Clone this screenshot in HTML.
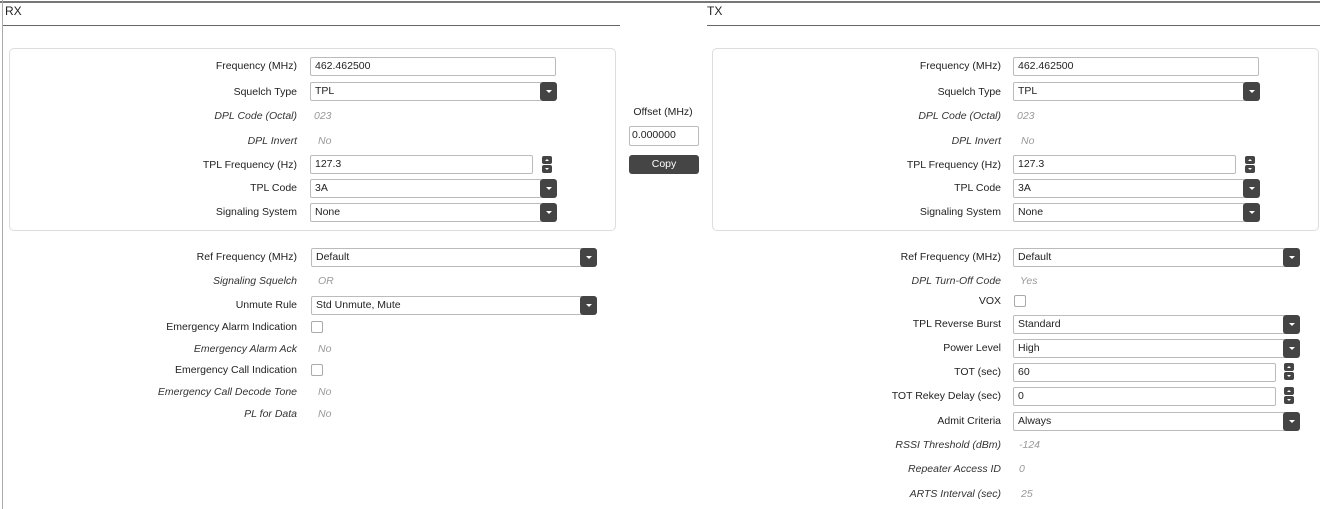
<!DOCTYPE html>
<html><head><style>
body{margin:0;width:1320px;height:509px;background:#fff;position:relative;overflow:hidden;font-family:"Liberation Sans",sans-serif;font-size:10.5px;color:#222}
div{position:absolute;box-sizing:border-box}
.l{text-align:right;width:200px;line-height:14px}
.i{font-style:italic;color:#333}
.v{font-style:italic;color:#999;line-height:14px}
.in{border:1px solid #bbb;border-radius:2px;height:19px;line-height:17px;padding-left:4px;background:#fff}
.dd{width:17px;height:19px;background:#444;border-radius:3px}
.dd:after{content:"";position:absolute;left:6px;top:8px;border-left:3px solid transparent;border-right:3px solid transparent;border-top:3px solid #fff}
.sp{width:10px;height:18px}
.sp:before,.sp:after{content:"";position:absolute;left:0;width:10px;height:8px;background:#444;border-radius:2px}
.sp:before{top:0}.sp:after{top:9px}
.sp i{position:absolute;left:3px;width:0;height:0;border-left:2px solid transparent;border-right:2px solid transparent;z-index:2}
.sp i.u{top:3px;border-bottom:2px solid #fff}
.sp i.d{top:12px;border-top:2px solid #fff}
.cb{width:12px;height:12px;border:1px solid #aaa;border-radius:2px}
.box{border:1px solid #ddd;border-radius:5px}
.h{height:1px;background:#666}
</style></head><body>
<div class="h" style="left:0;top:1px;width:1320px;height:2px;background:#777"></div>
<div style="left:2px;top:0;width:1px;height:509px;background:#aaa"></div>
<div style="left:5px;top:4px;font-size:12px">RX</div>
<div class="h" style="left:3px;top:25px;width:617px"></div>
<div style="left:707px;top:4px;font-size:12px">TX</div>
<div class="h" style="left:707px;top:25px;width:613px"></div>

<div class="box" style="left:9px;top:48px;width:607px;height:183px"></div>
<div class="box" style="left:712px;top:48px;width:607px;height:183px"></div>

<!-- RX box -->
<div class="l" style="left:97px;top:59px">Frequency (MHz)</div><div class="in" style="left:310px;top:57px;width:246px">462.462500</div>
<div class="l" style="left:97px;top:85px">Squelch Type</div><div class="in" style="left:310px;top:82px;width:232px">TPL</div><div class="dd" style="left:540px;top:82px"></div>
<div class="l i" style="left:97px;top:109px">DPL Code (Octal)</div><div class="v" style="left:314px;top:109px">023</div>
<div class="l i" style="left:97px;top:134px">DPL Invert</div><div class="v" style="left:318px;top:134px">No</div>
<div class="l" style="left:97px;top:158px">TPL Frequency (Hz)</div><div class="in" style="left:310px;top:155px;width:223px">127.3</div><div class="sp" style="left:542px;top:156px"><i class="u"></i><i class="d"></i></div>
<div class="l" style="left:97px;top:181px">TPL Code</div><div class="in" style="left:310px;top:179px;width:232px">3A</div><div class="dd" style="left:540px;top:179px"></div>
<div class="l" style="left:97px;top:205px">Signaling System</div><div class="in" style="left:310px;top:203px;width:232px">None</div><div class="dd" style="left:540px;top:203px"></div>

<!-- RX below -->
<div class="l" style="left:97px;top:250px">Ref Frequency (MHz)</div><div class="in" style="left:311px;top:248px;width:272px">Default</div><div class="dd" style="left:580px;top:248px"></div>
<div class="l i" style="left:97px;top:274px">Signaling Squelch</div><div class="v" style="left:318px;top:274px">OR</div>
<div class="l" style="left:97px;top:298px">Unmute Rule</div><div class="in" style="left:311px;top:296px;width:272px">Std Unmute, Mute</div><div class="dd" style="left:580px;top:296px"></div>
<div class="l" style="left:97px;top:320px">Emergency Alarm Indication</div><div class="cb" style="left:311px;top:321px"></div>
<div class="l i" style="left:97px;top:342px">Emergency Alarm Ack</div><div class="v" style="left:318px;top:342px">No</div>
<div class="l" style="left:97px;top:363px">Emergency Call Indication</div><div class="cb" style="left:311px;top:364px"></div>
<div class="l i" style="left:97px;top:385px">Emergency Call Decode Tone</div><div class="v" style="left:318px;top:385px">No</div>
<div class="l i" style="left:97px;top:407px">PL for Data</div><div class="v" style="left:318px;top:407px">No</div>

<!-- Middle -->
<div style="left:620px;top:106px;width:86px;text-align:center">Offset (MHz)</div>
<div class="in" style="left:629px;top:126px;width:70px;height:20px;padding-left:2px">0.000000</div>
<div style="left:629px;top:155px;width:70px;height:19px;background:#454545;border-radius:3px;color:#fff;text-align:center;line-height:19px">Copy</div>

<!-- TX box -->
<div class="l" style="left:801px;top:59px">Frequency (MHz)</div><div class="in" style="left:1013px;top:57px;width:246px">462.462500</div>
<div class="l" style="left:801px;top:85px">Squelch Type</div><div class="in" style="left:1013px;top:82px;width:232px">TPL</div><div class="dd" style="left:1243px;top:82px"></div>
<div class="l i" style="left:801px;top:109px">DPL Code (Octal)</div><div class="v" style="left:1017px;top:109px">023</div>
<div class="l i" style="left:801px;top:134px">DPL Invert</div><div class="v" style="left:1021px;top:134px">No</div>
<div class="l" style="left:801px;top:158px">TPL Frequency (Hz)</div><div class="in" style="left:1013px;top:155px;width:223px">127.3</div><div class="sp" style="left:1245px;top:156px"><i class="u"></i><i class="d"></i></div>
<div class="l" style="left:801px;top:181px">TPL Code</div><div class="in" style="left:1013px;top:179px;width:232px">3A</div><div class="dd" style="left:1243px;top:179px"></div>
<div class="l" style="left:801px;top:205px">Signaling System</div><div class="in" style="left:1013px;top:203px;width:232px">None</div><div class="dd" style="left:1243px;top:203px"></div>

<!-- TX below -->
<div class="l" style="left:801px;top:250px">Ref Frequency (MHz)</div><div class="in" style="left:1013px;top:248px;width:273px">Default</div><div class="dd" style="left:1283px;top:248px"></div>
<div class="l i" style="left:801px;top:274px">DPL Turn-Off Code</div><div class="v" style="left:1020px;top:274px">Yes</div>
<div class="l" style="left:801px;top:294px">VOX</div><div class="cb" style="left:1014px;top:295px"></div>
<div class="l" style="left:801px;top:317px">TPL Reverse Burst</div><div class="in" style="left:1013px;top:315px;width:273px">Standard</div><div class="dd" style="left:1283px;top:315px"></div>
<div class="l" style="left:801px;top:341px">Power Level</div><div class="in" style="left:1013px;top:339px;width:273px">High</div><div class="dd" style="left:1283px;top:339px"></div>
<div class="l" style="left:801px;top:365px">TOT (sec)</div><div class="in" style="left:1013px;top:363px;width:263px">60</div><div class="sp" style="left:1284px;top:363px"><i class="u"></i><i class="d"></i></div>
<div class="l" style="left:801px;top:389px">TOT Rekey Delay (sec)</div><div class="in" style="left:1013px;top:387px;width:263px">0</div><div class="sp" style="left:1284px;top:387px"><i class="u"></i><i class="d"></i></div>
<div class="l" style="left:801px;top:414px">Admit Criteria</div><div class="in" style="left:1013px;top:412px;width:273px">Always</div><div class="dd" style="left:1283px;top:412px"></div>
<div class="l i" style="left:801px;top:438px">RSSI Threshold (dBm)</div><div class="v" style="left:1019px;top:438px">-124</div>
<div class="l i" style="left:801px;top:462px">Repeater Access ID</div><div class="v" style="left:1019px;top:462px">0</div>
<div class="l i" style="left:801px;top:487px">ARTS Interval (sec)</div><div class="v" style="left:1021px;top:487px">25</div>
</body></html>
